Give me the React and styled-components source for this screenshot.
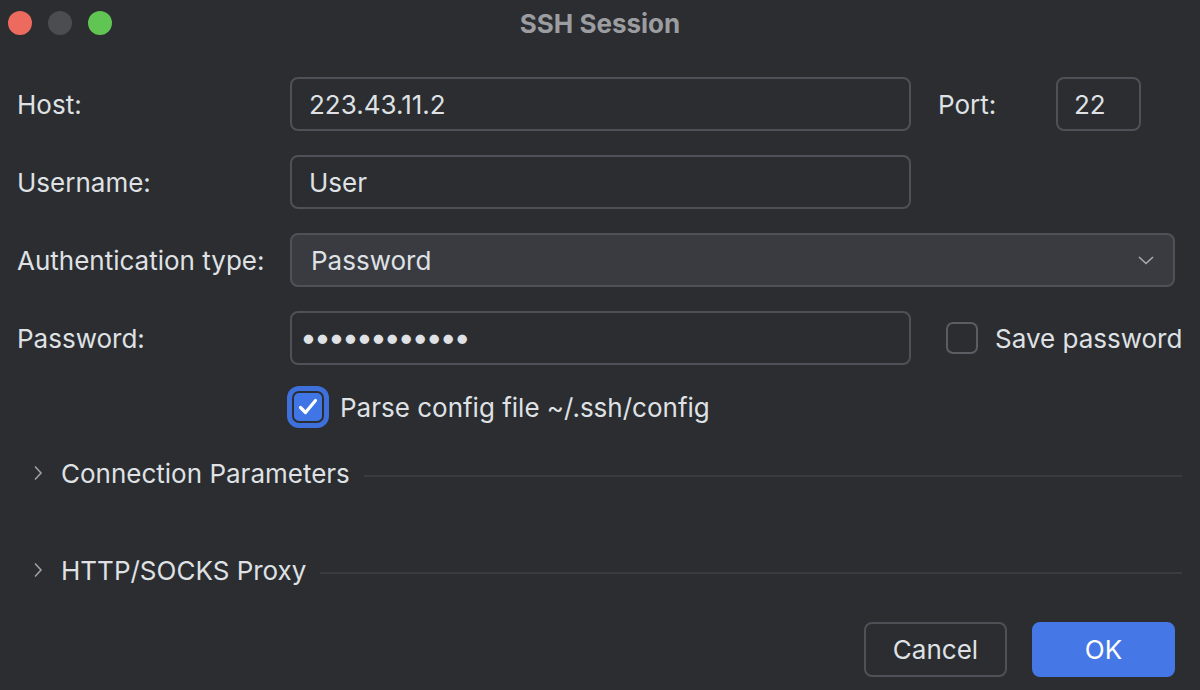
import React from "react";
import styled, { createGlobalStyle } from "styled-components";

const GlobalStyle = createGlobalStyle`
  html, body {
    margin: 0;
    padding: 0;
    background: #2b2d30;
  }
  * { box-sizing: border-box; }
`;

const Window = styled.div`
  width: 1200px;
  height: 690px;
  background: #2b2d30;
  font-family: Inter, "Noto Sans", "Liberation Sans", sans-serif;
  font-size: 26px;
  color: #dfe1e5;
  display: flex;
  flex-direction: column;
  overflow: hidden;
`;

const TitleBar = styled.div`
  height: 46px;
  display: flex;
  align-items: center;
`;

const Lights = styled.div`
  width: 120px;
  display: flex;
  gap: 16px;
  padding-left: 8px;
`;

const Light = styled.span`
  width: 24px;
  height: 24px;
  border-radius: 50%;
  background: ${(p) => p.color};
`;

const Title = styled.div`
  flex: 1;
  text-align: center;
  font-size: 26px;
  font-weight: 700;
  color: #9b9da1;
`;

const Spacer = styled.div`
  width: 120px;
`;

const Form = styled.div`
  flex: 1;
  display: flex;
  flex-direction: column;
  padding: 31px 25px 13px 17px;
`;

const Row = styled.div`
  display: flex;
  align-items: center;
  height: 54px;
  margin-bottom: 24px;
`;

const Label = styled.div`
  width: ${(p) => p.width || 273}px;
  flex-shrink: 0;
`;

const Field = styled.div`
  width: ${(p) => (p.width ? p.width + "px" : "auto")};
  flex: ${(p) => (p.width ? "none" : 1)};
  height: 54px;
  border: 2px solid #4e5157;
  border-radius: 8px;
  background: ${(p) => (p.filled ? "#393b40" : "transparent")};
  display: flex;
  align-items: center;
  padding: 0 17px 0 ${(p) => p.pad || 17}px;
  color: #dfe1e5;
`;

const Dots = styled.span`
  font-size: 30px;
  letter-spacing: -2.9px;
  margin-top: -2px;
`;

const FieldText = styled.span`
  flex: 1;
`;

const Gap = styled.div`
  width: ${(p) => p.w}px;
  flex-shrink: 0;
`;

const Check = styled.div`
  width: 32px;
  height: 32px;
  border-radius: 7px;
  flex-shrink: 0;
  border: 2px solid ${(p) => (p.on ? "#2b2d30" : "#5a5d63")};
  background: ${(p) => (p.on ? "#4075e6" : "transparent")};
  box-shadow: ${(p) => (p.on ? "0 0 0 5px #3e70dc" : "none")};
  display: flex;
  align-items: center;
  justify-content: center;
`;

const CheckLabel = styled.span`
  margin-left: ${(p) => p.gap}px;
  white-space: nowrap;
`;

const CheckRow = styled.div`
  display: flex;
  align-items: center;
  height: 42px;
  margin-top: -3px;
  padding-left: 275px;
`;

const Section = styled.div`
  display: flex;
  align-items: center;
  height: 40px;
  margin-top: ${(p) => p.top}px;
  padding-left: 14px;
  margin-right: -7px;
`;

const SectionTitle = styled.span`
  margin-left: 16px;
  margin-right: 14px;
  white-space: nowrap;
`;

const SectionLine = styled.div`
  flex: 1;
  height: 2px;
  background: #393b40;
  margin-top: 5px;
`;

const Footer = styled.div`
  margin-top: auto;
  display: flex;
  justify-content: flex-end;
  gap: 25px;
`;

const Button = styled.button`
  width: 143px;
  height: 55px;
  border-radius: 8px;
  font-family: inherit;
  font-size: 26px;
  color: ${(p) => (p.primary ? "#ffffff" : "#dfe1e5")};
  background: ${(p) => (p.primary ? "#4677e6" : "transparent")};
  border: 2px solid ${(p) => (p.primary ? "#4677e6" : "#4e5157")};
  padding: 0;
`;

const Chevron = ({ dir }) =>
  dir === "down" ? (
    <svg width="20" height="18" viewBox="0 0 20 18">
      <path d="M3 6 L10 12.5 L17 6" fill="none" stroke="#a8abb0" strokeWidth="1.6" />
    </svg>
  ) : (
    <svg width="14" height="18" viewBox="0 0 14 18">
      <path d="M4 2.5 L10 9 L4 15.5" fill="none" stroke="#9da0a8" strokeWidth="1.6" />
    </svg>
  );

export default function App() {
  return (
    <Window>
      <GlobalStyle />
      <TitleBar>
        <Lights>
          <Light color="#ed6a5e" />
          <Light color="#4c4d50" />
          <Light color="#61c554" />
        </Lights>
        <Title>SSH Session</Title>
        <Spacer />
      </TitleBar>
      <Form>
        <Row>
          <Label>Host:</Label>
          <Field width={621}>223.43.11.2</Field>
          <Gap w={27} />
          <Label width={118}>Port:</Label>
          <Field width={85} pad={16}>22</Field>
        </Row>
        <Row>
          <Label>Username:</Label>
          <Field width={621}>User</Field>
        </Row>
        <Row>
          <Label>Authentication type:</Label>
          <Field filled pad={19}>
            <FieldText>Password</FieldText>
            <Chevron dir="down" />
          </Field>
        </Row>
        <Row>
          <Label>Password:</Label>
          <Field width={621} pad={8}>
            <Dots>••••••••••••</Dots>
          </Field>
          <Gap w={35} />
          <Check />
          <CheckLabel gap={17}>Save password</CheckLabel>
        </Row>
        <CheckRow>
          <Check on>
            <svg width="26" height="26" viewBox="0 0 26 26">
              <path d="M5.5 13.5 L10.5 18.5 L20.5 6.5" fill="none" stroke="#ffffff" strokeWidth="3.2" strokeLinecap="round" strokeLinejoin="round" />
            </svg>
          </Check>
          <CheckLabel gap={16}>Parse config file ~/.ssh/config</CheckLabel>
        </CheckRow>
        <Section top={25}>
          <Chevron />
          <SectionTitle>Connection Parameters</SectionTitle>
          <SectionLine />
        </Section>
        <Section top={57}>
          <Chevron />
          <SectionTitle>HTTP/SOCKS Proxy</SectionTitle>
          <SectionLine />
        </Section>
        <Footer>
          <Button>Cancel</Button>
          <Button primary>OK</Button>
        </Footer>
      </Form>
    </Window>
  );
}
